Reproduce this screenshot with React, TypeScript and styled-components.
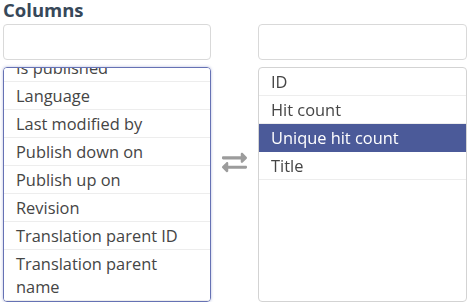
import React, { useLayoutEffect, useRef } from 'react';
import styled, { createGlobalStyle } from 'styled-components';
import { FaExchangeAlt } from 'react-icons/fa';

const GlobalStyle = createGlobalStyle`
    body {
        margin: 0;
        background: #ffffff;
        font-family: "Open Sans", "Liberation Sans", Arial, sans-serif;
    }
`;

const Wrapper = styled.div`
    padding: 0 0 0 3px;
    width: 474px;
    box-sizing: border-box;
`;

const Heading = styled.h3`
    margin: 0 0 4px 0;
    font-size: 18.5px;
    line-height: 20px;
    font-weight: 700;
    color: #374859;
`;

const Columns = styled.div`
    display: grid;
    grid-template-columns: 208px 47px 209px;
    align-items: start;
`;

const Side = styled.div`
    display: flex;
    flex-direction: column;
    gap: 7px;
`;

const Search = styled.input`
    height: 36px;
    box-sizing: border-box;
    border: 1px solid #d9d9d9;
    border-radius: 4px;
    background: #fff;
    padding: 0 10px;
    font: inherit;
    outline: none;
`;

const List = styled.ul<{ $focused?: boolean }>`
    list-style: none;
    margin: 0;
    padding: 0;
    height: 235px;
    box-sizing: border-box;
    overflow-y: auto;
    scrollbar-width: none;
    &::-webkit-scrollbar {
        display: none;
    }
    border: 1px solid ${p => (p.$focused ? '#6672b4' : '#d3d3d3')};
    border-radius: 4px;
    box-shadow: ${p => (p.$focused ? '0 0 3px rgba(90, 104, 180, 0.45)' : 'none')};
    background: #fff;
`;

const Item = styled.li<{ $selected?: boolean }>`
    padding: 2px 12px;
    font-size: 16.4px;
    line-height: 23px;
    color: ${p => (p.$selected ? '#ffffff' : '#454545')};
    background: ${p => (p.$selected ? '#4b5a99' : 'transparent')};
    border-bottom: 1px solid ${p => (p.$selected ? '#4b5a99' : '#ededed')};
`;

const Middle = styled.div`
    display: flex;
    justify-content: center;
    padding-top: 126px;
    color: #9c9c9c;
`;

const available = [
    'Is published',
    'Language',
    'Last modified by',
    'Publish down on',
    'Publish up on',
    'Revision',
    'Translation parent ID',
    'Translation parent name',
];

const selected = ['ID', 'Hit count', 'Unique hit count', 'Title'];

export default function App() {
    const leftRef = useRef<HTMLUListElement>(null);

    useLayoutEffect(() => {
        const el = leftRef.current;
        if (!el) return;
        el.scrollTop = 15;
        requestAnimationFrame(() => {
            el.scrollTop = 15;
        });
    }, []);

    return (
        <Wrapper>
            <GlobalStyle />
            <Heading>Columns</Heading>
            <Columns>
                <Side>
                    <Search type="text" />
                    <List ref={leftRef} $focused>
                        {available.map(name => (
                            <Item key={name}>{name}</Item>
                        ))}
                    </List>
                </Side>
                <Middle>
                    <FaExchangeAlt size={25} />
                </Middle>
                <Side>
                    <Search type="text" />
                    <List>
                        {selected.map(name => (
                            <Item key={name} $selected={name === 'Unique hit count'}>
                                {name}
                            </Item>
                        ))}
                    </List>
                </Side>
            </Columns>
        </Wrapper>
    );
}
